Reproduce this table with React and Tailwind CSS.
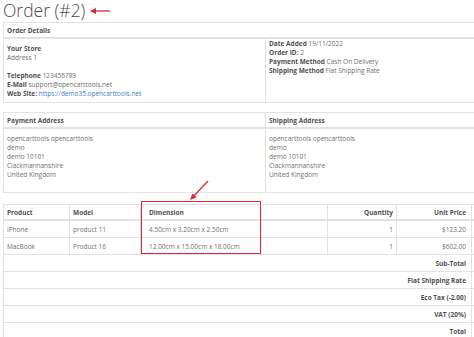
const td = "border border-[#e2e2e2] px-[3px] align-top";
const th = "border border-[#e2e2e2] border-b-2 px-[3px] pt-[3px] pb-[2px] font-bold text-[#505050]";

const Arrow = ({ className, x1, y1, x2, y2, w, h }) => (
  <svg className={className} width={w} height={h} viewBox={`0 0 ${w} ${h}`}>
    <defs>
      <marker id={`ah-${w}`} markerWidth="6" markerHeight="6" refX="5" refY="3" orient="auto" markerUnits="userSpaceOnUse">
        <path d="M0,0 L6,3 L0,6 Z" fill="#e0283a" />
      </marker>
    </defs>
    <line x1={x1} y1={y1} x2={x2} y2={y2} stroke="#e0283a" strokeWidth="1.3" markerEnd={`url(#ah-${w})`} />
  </svg>
);

const products = [
  { name: "iPhone", model: "product 11", dim: "4.50cm x 3.20cm x 2.50cm", qty: 1, price: "$123.20" },
  { name: "MacBook", model: "Product 16", dim: "12.00cm x 15.00cm x 18.00cm", qty: 1, price: "$602.00" },
];

const totals = ["Sub-Total", "Flat Shipping Rate", "Eco Tax (-2.00)", "VAT (20%)", "Total"];

export default function App() {
  return (
    <div className="relative w-[474px] h-[337px] overflow-hidden bg-white font-['Open_Sans',sans-serif] text-[6.5px] leading-[9px] text-[#6f6f6f]">
      <div className="w-[540px] pl-[3px]">
        <h1 className="flex items-center h-[24px] -mt-[2px] text-[17.5px] leading-[22px] font-light text-[#4a4a4a]">
          Order (#2)
          <Arrow className="ml-[5px] mt-[1px]" w={21} h={8} x1={20} y1={4} x2={1} y2={4} />
        </h1>

        <table className="w-full border-collapse table-fixed">
          <colgroup>
            <col className="w-[262px]" />
            <col />
          </colgroup>
          <thead>
            <tr>
              <td colSpan={2} className={th}>Order Details</td>
            </tr>
          </thead>
          <tbody>
            <tr>
              <td className={`${td} pt-[5px] pb-[4px]`}>
                <b className="text-[#505050]">Your Store</b>
                <br />
                Address 1
                <br />
                <br />
                <b className="text-[#505050]">Telephone</b> 123456789
                <br />
                <b className="text-[#505050]">E-Mail</b> support@opencarttools.net
                <br />
                <b className="text-[#505050]">Web Site:</b> <span className="text-[#3d7fc1]">https://demo35.opencarttools.net</span>
              </td>
              <td className={`${td} align-middle`}>
                <b className="text-[#505050]">Date Added</b> 19/11/2022
                <br />
                <b className="text-[#505050]">Order ID:</b> 2
                <br />
                <b className="text-[#505050]">Payment Method</b> Cash On Delivery
                <br />
                <b className="text-[#505050]">Shipping Method</b> Flat Shipping Rate
              </td>
            </tr>
          </tbody>
        </table>

        <table className="mt-[9px] w-full border-collapse table-fixed">
          <colgroup>
            <col className="w-[262px]" />
            <col />
          </colgroup>
          <thead>
            <tr>
              <td className={th}>Payment Address</td>
              <td className={th}>Shipping Address</td>
            </tr>
          </thead>
          <tbody>
            <tr>
              {[0, 1].map((i) => (
                <td key={i} className={`${td} pt-[5px] pb-[13px]`}>
                  opencarttools opencarttools
                  <br />
                  demo
                  <br />
                  demo 10101
                  <br />
                  Clackmannanshire
                  <br />
                  United Kingdom
                </td>
              ))}
            </tr>
          </tbody>
        </table>

        <div className="relative mt-[11px]">
          <table className="w-full border-collapse table-fixed">
            <colgroup>
              <col className="w-[66px]" />
              <col className="w-[71px]" />
              <col className="w-[187px]" />
              <col className="w-[69px]" />
              <col className="w-[75px]" />
              <col />
            </colgroup>
            <thead>
              <tr>
                <td className={th}>Product</td>
                <td className={th}>Model</td>
                <td className={`${th} pl-[8px]`}>Dimension</td>
                <td className={`${th} text-right`}>Quantity</td>
                <td className={`${th} text-right pr-[5px]`}>Unit Price</td>
                <td className={th}></td>
              </tr>
            </thead>
            <tbody>
              {products.map((p) => (
                <tr key={p.name}>
                  <td className={`${td} pt-[4px] pb-[3px]`}>{p.name}</td>
                  <td className={`${td} pt-[4px] pb-[3px]`}>{p.model}</td>
                  <td className={`${td} pt-[4px] pb-[3px] pl-[8px]`}>{p.dim}</td>
                  <td className={`${td} pt-[4px] pb-[3px] text-right`}>{p.qty}</td>
                  <td className={`${td} pt-[4px] pb-[3px] text-right pr-[5px]`}>{p.price}</td>
                  <td className={`${td} pt-[4px] pb-[3px]`}></td>
                </tr>
              ))}
              {totals.map((t) => (
                <tr key={t}>
                  <td colSpan={5} className={`${td} pt-[4px] pb-[3px] text-right pr-[5px] font-bold text-[#505050]`}>{t}</td>
                  <td className={`${td} pt-[4px] pb-[3px]`}></td>
                </tr>
              ))}
            </tbody>
          </table>
          <div className="absolute left-[138px] top-[-3px] w-[120px] h-[53px] border-[1.5px] border-[#e0283a]" />
        </div>
      </div>
      <Arrow className="absolute left-[188px] top-[179px]" w={22} h={23} x1={20} y1={2} x2={3} y2={20} />
    </div>
  );
}
